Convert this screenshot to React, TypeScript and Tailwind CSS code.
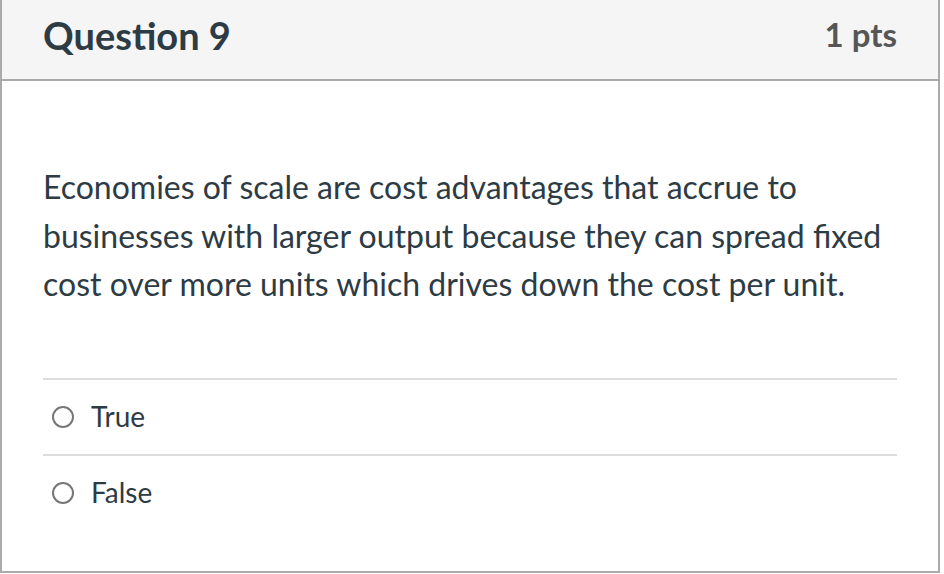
export default function App() {
  const options = ['True', 'False']
  return (
    <div className="w-[944px] h-[574px] bg-white" style={{ fontFamily: 'Lato, "Open Sans", sans-serif' }}>
      <div className="w-[940px] h-[573px] border-x-2 border-b-2 border-[#aaaaaa] flex flex-col">
        {/* header */}
        <div className="h-[81px] shrink-0 bg-[#f5f5f5] border-b-2 border-[#aaaaaa] px-[41px] flex items-center justify-between">
          <h2 className="text-[38px] font-bold text-[#2d3b45] leading-none pb-[10px]">Question 9</h2>
          <span className="text-[33px] font-bold text-[#565656] leading-none pb-[10px]">1 pts</span>
        </div>

        {/* body */}
        <div className="px-[41px] pt-[82px]">
          <p className="text-[32px] leading-[48.5px] text-[#2d3b45]">
            Economies of scale are cost advantages that accrue to businesses with larger output because they can spread fixed cost over more units which drives down the cost per unit.
          </p>
          <div className="mt-[69px]">
            {options.map((o) => (
              <label key={o} className="flex items-center h-[76px] border-t-2 border-[#dcdcdc] pl-[9px] gap-[17px] pb-[2px]">
                <span className="w-[22px] h-[22px] rounded-full border-2 border-[#777777] bg-white shrink-0 mt-[2px]" />
                <span className="text-[28px] text-[#2d3b45] leading-none">{o}</span>
              </label>
            ))}
          </div>
        </div>
      </div>
    </div>
  )
}
